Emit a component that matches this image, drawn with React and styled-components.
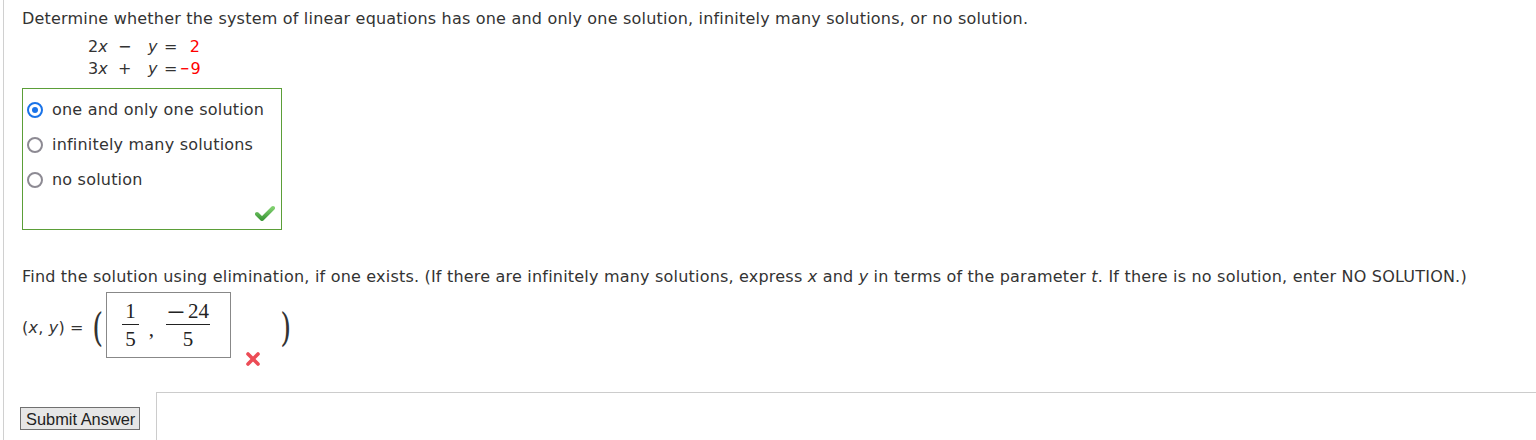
import React from 'react';
import styled, { createGlobalStyle } from 'styled-components';

const GlobalStyle = createGlobalStyle`
  html, body {
    margin: 0;
    padding: 0;
    background: #fff;
  }
  body {
    font-family: 'DejaVu Sans', Verdana, sans-serif;
    color: #333;
  }
`;

const Page = styled.div`
  padding-left: 3px;
  height: 440px;
  overflow: hidden;
`;

const Frame = styled.div`
  border-left: 1px solid #d0d0d0;
  padding: 9px 0 0 18px;
  height: 100%;
  box-sizing: border-box;
`;

const Prompt = styled.div`
  font-size: 16px;
  letter-spacing: 0.2px;
  line-height: 20px;
  white-space: nowrap;
`;

const Equations = styled.div`
  display: grid;
  grid-template-columns: 30px 30px 16px 12px 24px;
  margin: 7px 0 0 66px;
  font-size: 16px;
  line-height: 22px;
`;

const Cell = styled.span`
  text-align: ${p => (p.$right ? 'right' : 'left')};
  color: ${p => (p.$red ? '#f00' : '#333')};
  font-style: ${p => (p.$italic ? 'italic' : 'normal')};
  white-space: nowrap;
`;

const NarrowMinus = styled.span`
  display: inline-block;
  transform: scaleX(0.72);
  transform-origin: right center;
  margin-right: 1px;
`;

const ChoiceBox = styled.div`
  width: 258px;
  height: 137px;
  margin-top: 8px;
  border: 1px solid #5b9e38;
  padding-top: 3px;
  box-sizing: content-box;
  display: flex;
  flex-direction: column;
`;

const Choice = styled.label`
  display: flex;
  align-items: center;
  height: 35px;
  font-size: 16px;
  letter-spacing: 0.2px;
  gap: 9px;
  padding-left: 4px;
`;

const Radio = styled.span`
  width: 12px;
  height: 12px;
  border-radius: 50%;
  border: 2px solid ${p => (p.$checked ? '#1a73e8' : '#8d8a93')};
  display: flex;
  align-items: center;
  justify-content: center;
  flex-shrink: 0;

  &::after {
    content: '';
    width: 6px;
    height: 6px;
    border-radius: 50%;
    background: ${p => (p.$checked ? '#1a73e8' : 'transparent')};
  }
`;

const Mark = styled.div`
  margin-top: auto;
  display: flex;
  justify-content: flex-end;
  padding: 0 6px 8px 0;
`;

const Question = styled(Prompt)`
  margin-top: 37px;
`;

const AnswerRow = styled.div`
  display: flex;
  align-items: center;
  margin-top: 5px;
  height: 66px;
`;

const Label = styled.span`
  font-size: 16px;
  letter-spacing: 0.2px;
  margin-right: 6px;
  margin-top: 4px;

  & > i {
    font-style: italic;
  }
`;

const Paren = styled.span`
  font-family: 'DejaVu Serif', serif;
  font-size: 40px;
  font-weight: 200;
  line-height: 40px;
  color: #333;
  transform: scaleX(0.7);
  margin-top: 4px;
`;

const InputBox = styled.div`
  width: 125px;
  height: 66px;
  border: 1px solid #888;
  display: flex;
  align-items: center;
  padding-left: 15px;
  box-sizing: border-box;
  margin-left: 1px;
  font-family: 'Liberation Serif', 'DejaVu Serif', serif;
  font-size: 21px;
  color: #222;
`;

const Fraction = styled.span`
  display: inline-flex;
  flex-direction: column;
  align-items: center;
  line-height: 22px;
`;

const Num = styled.span`
  border-bottom: 1px solid #222;
  padding: 0 ${p => p.$pad || 3}px 2px;
  white-space: nowrap;
`;

const Minus = styled.span`
  display: inline-block;
  font-family: 'DejaVu Serif', serif;
  font-size: 19px;
  font-weight: 300;
  transform: scaleX(1.25);
  margin: 0 4px 0 1px;
`;

const Den = styled.span`
  padding-top: 3px;
`;

const Comma = styled.span`
  margin: 8px 12px 0 10px;
`;

const Wrong = styled.div`
  align-self: flex-end;
  margin: 0 17px -9px 14px;
  display: flex;
`;

const Footer = styled.div`
  display: flex;
  align-items: flex-start;
  margin-top: 34px;
  margin-left: -2px;
`;

const SubmitButton = styled.button`
  margin-top: 15px;
  font-family: 'Liberation Sans', Arial, sans-serif;
  font-size: 16.4px;
  line-height: 18px;
  color: #222;
  background: #e6e6e6;
  border: 1px solid #707070;
  padding: 2px 4px 1px 5px;
  border-radius: 0;
`;

const ResultArea = styled.div`
  flex: 1;
  margin-left: 16px;
  height: 60px;
  border-top: 1px solid #ccc;
  border-left: 1px solid #ccc;
`;

const CheckIcon = () => (
  <svg width="20" height="16" viewBox="0 0 20 16">
    <defs>
      <linearGradient id="ck" x1="0" y1="0" x2="0" y2="1">
        <stop offset="0" stopColor="#7fcf6e" />
        <stop offset="1" stopColor="#3f9a3a" />
      </linearGradient>
    </defs>
    <path d="M2 9 L7 14 L18 3" fill="none" stroke="url(#ck)" strokeWidth="4" strokeLinecap="round" strokeLinejoin="round" />
  </svg>
);

const CrossIcon = () => (
  <svg width="16" height="16" viewBox="0 0 16 16">
    <path d="M3 3 L13 13 M13 3 L3 13" stroke="#ec4c56" strokeWidth="3.6" strokeLinecap="round" />
  </svg>
);

const options = [
  { id: 'one', text: 'one and only one solution', checked: true },
  { id: 'inf', text: 'infinitely many solutions' },
  { id: 'none', text: 'no solution' },
];

const App = () => (
  <Page>
    <GlobalStyle />
    <Frame>
      <Prompt>
        Determine whether the system of linear equations has one and only one solution, infinitely many solutions, or no solution.
      </Prompt>
      <Equations>
        <Cell>2<i>x</i></Cell>
        <Cell>−</Cell>
        <Cell $italic>y</Cell>
        <Cell>=</Cell>
        <Cell $red $right>2</Cell>
        <Cell>3<i>x</i></Cell>
        <Cell>+</Cell>
        <Cell $italic>y</Cell>
        <Cell>=</Cell>
        <Cell $red $right><NarrowMinus>−</NarrowMinus>9</Cell>
      </Equations>
      <ChoiceBox>
        {options.map(o => (
          <Choice key={o.id}>
            <Radio $checked={o.checked} />
            {o.text}
          </Choice>
        ))}
        <Mark>
          <CheckIcon />
        </Mark>
      </ChoiceBox>
      <Question>
        Find the solution using elimination, if one exists. (If there are infinitely many solutions, express <i>x</i> and <i>y</i> in terms of the parameter <i>t</i>. If there is no solution, enter NO SOLUTION.)
      </Question>
      <AnswerRow>
        <Label>
          (<i>x</i>, <i>y</i>) =
        </Label>
        <Paren>(</Paren>
        <InputBox>
          <Fraction>
            <Num>1</Num>
            <Den>5</Den>
          </Fraction>
          <Comma>,</Comma>
          <Fraction>
            <Num $pad={1}><Minus>−</Minus>24</Num>
            <Den>5</Den>
          </Fraction>
        </InputBox>
        <Wrong>
          <CrossIcon />
        </Wrong>
        <Paren>)</Paren>
      </AnswerRow>
      <Footer>
        <SubmitButton>Submit Answer</SubmitButton>
        <ResultArea />
      </Footer>
    </Frame>
  </Page>
);

export default App;
